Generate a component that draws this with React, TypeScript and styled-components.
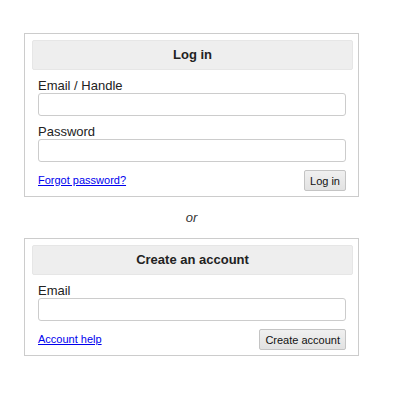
import React from "react";
import styled, { createGlobalStyle } from "styled-components";

const Global = createGlobalStyle`
  html, body { margin: 0; padding: 0; background: #fff; }
  body { font-family: "Liberation Sans", Arial, sans-serif; color: #222; }
  * { box-sizing: border-box; }
`;

const Page = styled.div`
  padding: 33px 0 0 24px;
  width: 359px;
`;

const Panel = styled.form`
  width: 335px;
  border: 1px solid #cccccc;
  padding: 6px 5px 5px 7px;
  background: #fff;
`;

const PanelHeader = styled.div`
  height: 30px;
  line-height: 28px;
  background: #eeeeee;
  border: 1px solid #e6e6e6;
  border-radius: 2px;
  text-align: center;
  font-size: 13px;
  font-weight: bold;
  color: #222;
`;

const PanelBody = styled.div`
  padding: 8px 7px 0 6px;
  display: flex;
  flex-direction: column;
`;

const Label = styled.label`
  display: block;
  font-size: 13px;
  line-height: 15px;
  color: #222;
`;

const Input = styled.input`
  display: block;
  width: 100%;
  height: 23px;
  margin: 0 0 8px;
  border: 1px solid #cccccc;
  border-radius: 3px;
  padding: 2px 4px;
  font-family: inherit;
  font-size: 13px;
  outline: none;
`;

const Footer = styled.div`
  display: flex;
  align-items: center;
  justify-content: space-between;
  height: 21px;
`;

const Link = styled.a`
  font-size: 11px;
  line-height: 13px;
  color: #0000ee;
  text-decoration: underline;
  cursor: pointer;
`;

const Button = styled.button`
  height: 21px;
  padding: 0 5px;
  border: 1px solid #c4c4c4;
  border-radius: 2px;
  background: linear-gradient(#f0f0f0, #e2e2e2);
  font-family: "Liberation Sans", Arial, sans-serif;
  font-size: 11px;
  color: #111;
  cursor: pointer;
`;

const Separator = styled.div`
  width: 335px;
  text-align: center;
  font-style: italic;
  font-size: 13px;
  line-height: 15px;
  color: #333;
  margin: 13px 0 13px;
`;

export default function App() {
  return (
    <>
      <Global />
      <Page>
        <Panel onSubmit={(e) => e.preventDefault()}>
          <PanelHeader>Log in</PanelHeader>
          <PanelBody>
            <Label htmlFor="handle">Email / Handle</Label>
            <Input id="handle" type="text" />
            <Label htmlFor="password">Password</Label>
            <Input id="password" type="password" />
            <Footer>
              <Link>Forgot password?</Link>
              <Button type="submit">Log in</Button>
            </Footer>
          </PanelBody>
        </Panel>
        <Separator>or</Separator>
        <Panel onSubmit={(e) => e.preventDefault()}>
          <PanelHeader>Create an account</PanelHeader>
          <PanelBody>
            <Label htmlFor="email">Email</Label>
            <Input id="email" type="email" />
            <Footer>
              <Link>Account help</Link>
              <Button type="submit">Create account</Button>
            </Footer>
          </PanelBody>
        </Panel>
      </Page>
    </>
  );
}
